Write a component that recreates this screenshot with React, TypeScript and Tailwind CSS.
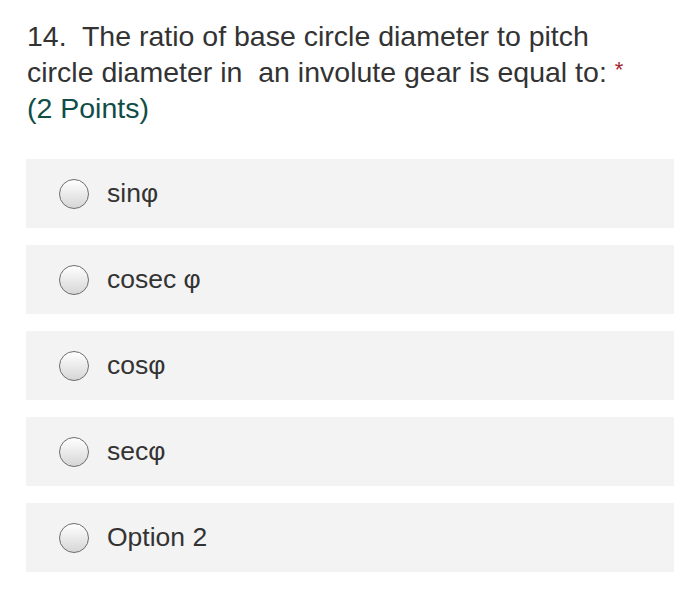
const options = ['sinφ', 'cosec φ', 'cosφ', 'secφ', 'Option 2']

function Radio() {
  return (
    <span className="h-[30px] w-[30px] shrink-0 rounded-full border-[1.5px] border-[#6e6e6e] bg-gradient-to-b from-white to-[#d6d6d6]" />
  )
}

export default function App() {
  return (
    <div className="min-h-[608px] w-[700px] bg-white font-['Liberation_Sans',Arial,sans-serif] text-[#333]">
      <div className="whitespace-pre-wrap px-[27px] pt-[18px] text-[28.5px] leading-[36px]">
        <div>{'14.  The ratio of base circle diameter to pitch'}</div>
        <div>
          {'circle diameter in  an involute gear is equal to: '}
          <span className="relative top-[-5px] text-[22px] leading-none text-[#a4262c]">*</span>
        </div>
        <div className="text-[#114d47]">(2 Points)</div>
      </div>
      <div className="mx-[26px] mt-[33px] flex flex-col gap-[17px]">
        {options.map((o) => (
          <div key={o} className="flex h-[69px] items-center gap-[18px] bg-[#f3f3f3] pl-[33px] text-[26.5px]">
            <Radio />
            <span className="leading-none">{o}</span>
          </div>
        ))}
      </div>
    </div>
  )
}
